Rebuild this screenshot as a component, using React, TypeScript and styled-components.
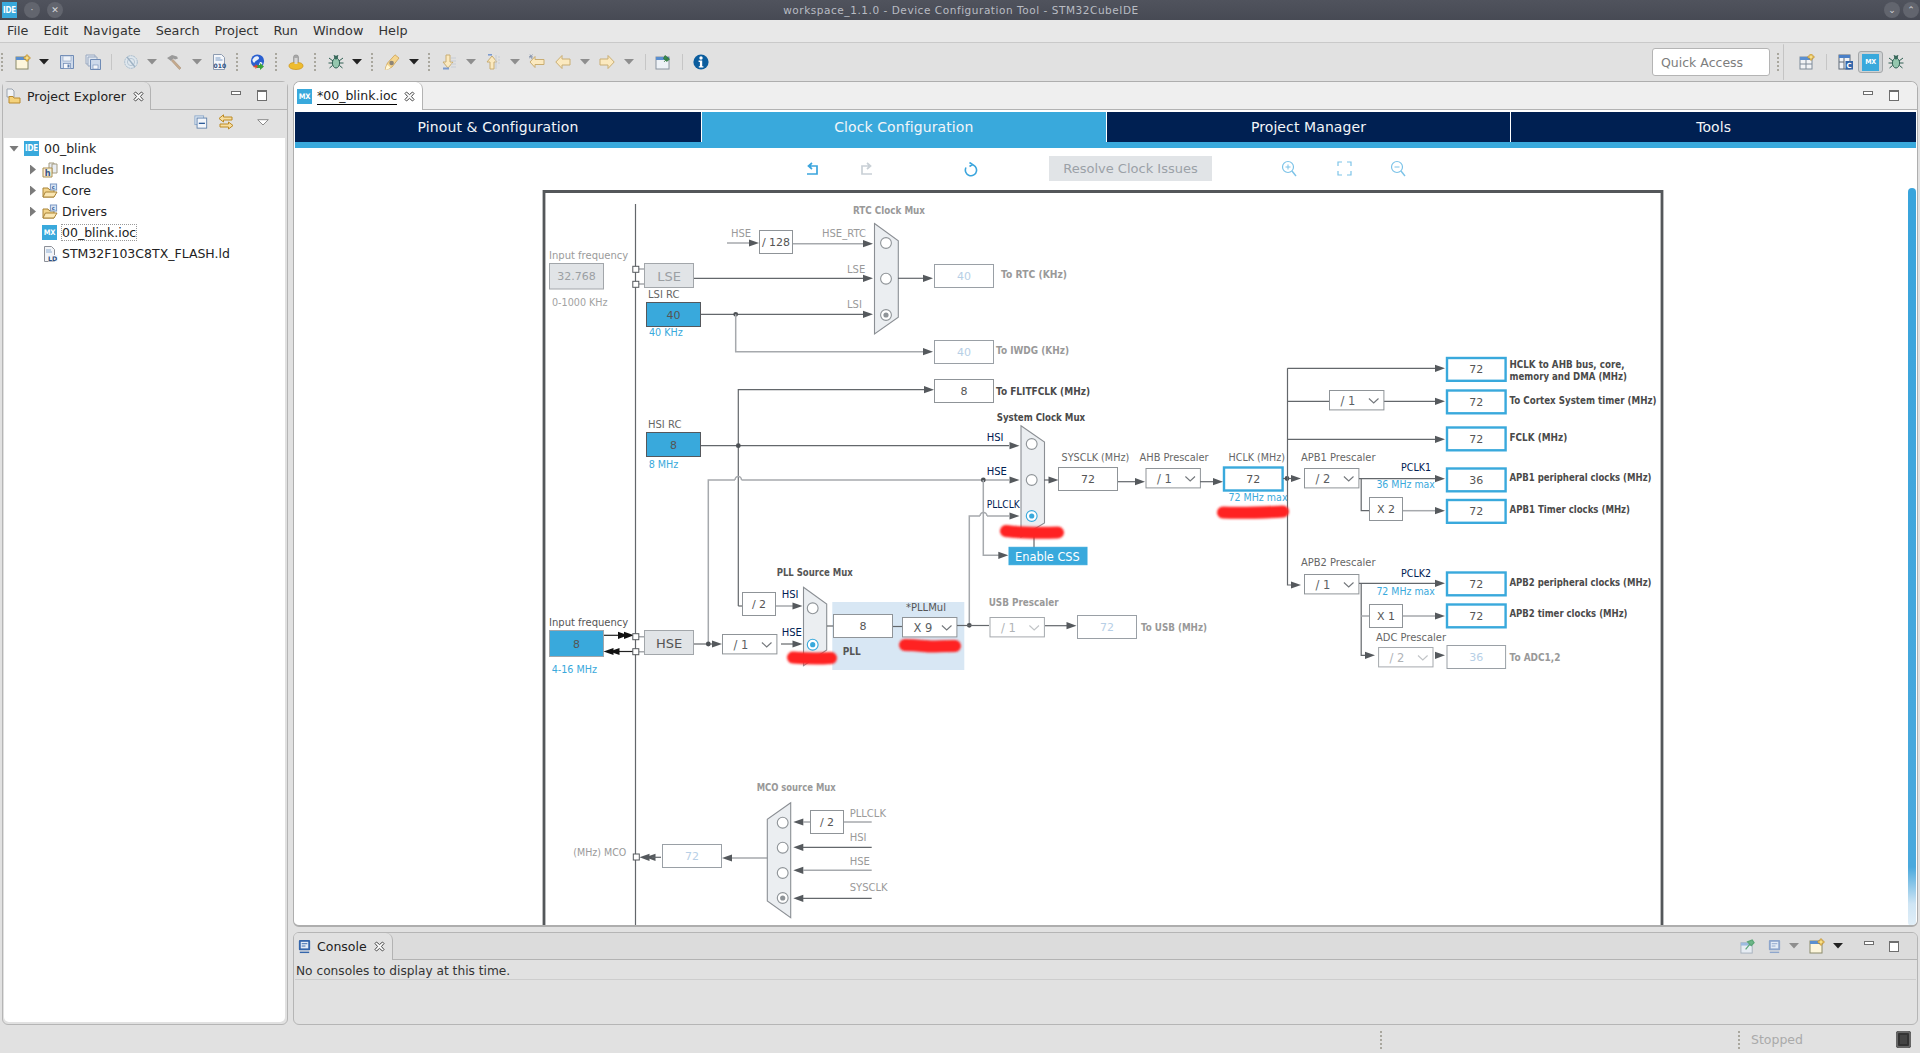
import React from "react";
import styled, { createGlobalStyle } from "styled-components";

const Global = createGlobalStyle`
  html, body { margin: 0; padding: 0; background: #e1e1e1; }
  * { box-sizing: border-box; }
`;

const FONT = `"DejaVu Sans", "Liberation Sans", sans-serif`;
const BLUE = "#39a9dc";
const NAVY = "#002052";

/* ---------- window chrome ---------- */
const Page = styled.div`
  width: 1920px; height: 1053px; display: flex; flex-direction: column; overflow: hidden;
  background: #e1e1e1; font-family: ${FONT}; font-size: 13px; color: #222;
`;
const TitleBar = styled.div`
  height: 20px; flex: none; position: relative; display: flex; align-items: center; justify-content: center;
  background: linear-gradient(#50535d, #474a54);
`;
const TitleText = styled.span`
  color: #b9bcc3; font-size: 10.5px; letter-spacing: 0.55px; margin-left: 2px;
`;
const TitleLeft = styled.div`
  position: absolute; left: 2px; top: 2px; display: flex; align-items: center; gap: 7px;
`;
const TitleRight = styled.div`
  position: absolute; right: 1px; top: 2px; display: flex; align-items: center; gap: 3px;
`;
const WinBtn = styled.span`
  width: 16px; height: 16px; border-radius: 50%; background: #62656e; color: #d6d7da;
  display: flex; align-items: center; justify-content: center; font-size: 9px; line-height: 1;
`;
const Badge = styled.span<{ $w?: number; $h?: number; $fs?: number; $mr?: number }>`
  width: ${(p) => p.$w ?? 15}px; height: ${(p) => p.$h ?? 15}px; flex: none; background: ${BLUE}; color: #fff;
  display: inline-flex; align-items: center; justify-content: center; margin-right: ${(p) => p.$mr ?? 0}px;
  font-size: ${(p) => p.$fs ?? 8}px; font-weight: 700; font-family: "DejaVu Sans Condensed", ${FONT}; letter-spacing: -0.2px;
`;
const MenuBar = styled.div`
  height: 23px; flex: none; display: flex; align-items: center; gap: 15px; padding: 0 0 1px 7px;
  background: #e8e8e8; border-bottom: 1px solid #c9c9c9;
`;
const MenuItem = styled.span`
  font-size: 12.8px; color: #333;
`;
const Toolbar = styled.div`
  height: 38px; flex: none; display: flex; align-items: center; background: #e1e1e1; position: relative;
`;
const Slot = styled.div<{ $w: number }>`
  width: ${(p) => p.$w}px; flex: none; display: flex; align-items: center; height: 100%;
`;
const Grip = styled.span`
  width: 2px; height: 18px; flex: none;
  background: repeating-linear-gradient(#a9a79e 0 2px, transparent 2px 4px);
`;
const Sep = styled.span`
  width: 1px; height: 16px; flex: none; background: #c6c6c6;
`;
const PerspSep = styled(Sep)`
  margin: 0 11px;
`;
const QuickWrap = styled.div`
  margin-left: auto; display: flex; align-items: center; height: 100%; padding-right: 16px;
`;
const QuickAccess = styled.div`
  width: 118px; height: 28px; background: #fff; border: 1px solid #b4b4b4; border-radius: 3px;
  color: #7d7d7d; font-size: 12.5px; display: flex; align-items: center; padding-left: 8px; margin-right: 7px;
`;
const GripCurve = styled.span`
  width: 1px; height: 36px; background: #c4c4c4; border-radius: 2px; margin: 0 15px 0 4px;
`;
const PerspectiveActive = styled.span`
  width: 25px; height: 22px; background: #cfd2d4; border: 1px solid #a4a7a9; border-radius: 3px;
  display: flex; align-items: center; justify-content: center; margin: 0 5px 0 4px;
`;

/* ---------- workspace panels ---------- */
const Workspace = styled.div`
  flex: none; height: 945px; display: flex; gap: 5px; padding: 0 2px 1px 2px;
`;
const LeftPanel = styled.section`
  width: 286px; flex: none; display: flex; flex-direction: column; background: #e1e1e1;
  border: 1px solid #b5b5b5; border-radius: 6px;
`;
const RightCol = styled.div`
  flex: 1; min-width: 0; display: flex; flex-direction: column; gap: 5px;
`;
const EditorPanel = styled.section`
  height: 846px; flex: none; display: flex; flex-direction: column; background: #fff;
  border: 1px solid #aeaeae; border-bottom-width: 2px; border-radius: 7px 7px 6px 6px; overflow: hidden;
`;
const ConsolePanel = styled.section`
  flex: 1; display: flex; flex-direction: column; background: #e1e1e1;
  border: 1px solid #b5b5b5; border-radius: 6px; overflow: hidden;
`;
const TabHeader = styled.div<{ $bg: string; $h: number }>`
  height: ${(p) => p.$h}px; flex: none; display: flex; align-items: stretch; background: ${(p) => p.$bg};
  border-bottom: 1px solid #b3b3b3;
`;
const Tab = styled.div<{ $w: number; $bg: string }>`
  width: ${(p) => p.$w}px; flex: none; display: flex; align-items: center; gap: 5px; padding-left: 3px;
  background: ${(p) => p.$bg}; border-right: 1px solid #b3b3b3; border-radius: 0 7px 0 0; margin-bottom: -1px;
  font-size: 12.5px; color: #222;
`;
const ActiveName = styled.span`
  font-size: 12.5px; border-bottom: 1px solid #000; padding-bottom: 1px; line-height: 15px;
`;
const PanelTools = styled.div<{ $pr: number }>`
  margin-left: auto; display: flex; align-items: center; padding-right: ${(p) => p.$pr}px; gap: 16px;
`;
const MinBtn = styled.span`
  width: 10px; height: 4px; border: 1px solid #6e6e6e; background: #fff; margin-top: -6px;
`;
const MaxBtn = styled.span`
  width: 10px; height: 11px; border: 1px solid #6e6e6e; border-top-width: 2px; background: #fff;
`;
const LeftTools = styled.div`
  height: 28px; flex: none; display: flex; align-items: center; justify-content: flex-end; padding: 0 18px 4px 0; gap: 10px;
`;
const ViewMenu = styled.svg`
  display: block; flex: none; margin-left: 13px;
`;
const Tree = styled.div`
  flex: 1; background: #fff; margin: 0 2px 2px 1px; display: flex; flex-direction: column; border-radius: 0 0 5px 5px;
`;
const TreeRow = styled.div<{ $indent: number }>`
  height: 21px; flex: none; display: flex; align-items: center; padding-left: ${(p) => p.$indent}px; gap: 4px; font-size: 12.5px; color: #222;
`;
const Twisty = styled.span<{ $open?: boolean }>`
  width: ${(p) => (p.$open ? 10 : 6)}px; flex: none; height: ${(p) => (p.$open ? 6 : 10)}px; margin-right: ${(p) => (p.$open ? 1 : 2)}px;
  background: #7b7b7b;
  clip-path: ${(p) => (p.$open ? "polygon(0 0,100% 0,50% 100%)" : "polygon(0 0,100% 50%,0 100%)")};
`;
const FocusName = styled.span`
  outline: 1px dotted #9a9a9a; margin-left: 1px;
`;

/* ---------- perspective nav ---------- */
const ClockNav = styled.nav`
  flex: none; display: grid; grid-template-columns: 407px repeat(3, 1fr); margin: 2px 1px 0 1px; border-bottom: 6px solid ${BLUE};
`;
const NavTab = styled.div<{ $active?: boolean }>`
  height: 30px; display: flex; align-items: center; justify-content: center; font-size: 14px; letter-spacing: 0.1px; color: #f2f5f8;
  background: ${(p) => (p.$active ? BLUE : NAVY)}; border-right: 1px solid #fff;
  &:last-child { border-right: 0; }
`;
const DiagramBar = styled.div`
  height: 37px; flex: none; display: flex; align-items: center; padding: 4px 0 0 509px;
`;
const BarIcon = styled.span<{ $ml?: number }>`
  width: 20px; height: 20px; flex: none; display: flex; align-items: center; justify-content: center; margin-left: ${(p) => p.$ml ?? 0}px;
`;
const ResolveBtn = styled.div`
  width: 163px; height: 25px; flex: none; margin-left: 68px; background: #e1e4e7; color: #9ba1a7;
  display: flex; align-items: center; justify-content: center; font-size: 13px;
`;
const ClockBody = styled.div`
  flex: 1; min-height: 0; position: relative; overflow: hidden;
`;
const DiagramSvg = styled.svg`
  display: block; margin-left: 236px;
`;
const ScrollThumb = styled.div`
  position: absolute; right: 1px; top: 40px; width: 8px; height: 738px; border-radius: 4px;
  background: linear-gradient(#39a4dc 0, #4aa9dd 92%, #cfe5f4 97%, #e2eff8 100%);
`;
const ConsoleMsg = styled.div`
  height: 18px; flex: none; display: flex; align-items: center; padding-left: 1px; font-size: 12.2px; color: #333;
  margin-top: 2px; border-bottom: 1px solid #cdcdcd; margin-left: 1px; margin-right: 1px;
`;
const ConsoleTools = styled.div`
  margin-left: auto; display: flex; align-items: center; padding-right: 18px;
`;
const ConsoleTool = styled.span<{ $w: number }>`
  width: ${(p) => p.$w}px; display: flex; align-items: center; flex: none;
`;
const StatusBar = styled.div`
  flex: 1; position: relative; display: flex; align-items: center; padding-left: 1380px;
`;
const StatusGrip = styled.span<{ $ml?: number }>`
  width: 2px; height: 18px; flex: none; margin-left: ${(p) => p.$ml ?? 0}px;
  background: repeating-linear-gradient(#a9a79e 0 2px, transparent 2px 4px);
`;
const Stopped = styled.span`
  color: #aaa; font-size: 12.5px; margin-left: 11px;
`;
const StopIcon = styled.span`
  width: 15px; height: 17px; background: #444; border-radius: 3px; margin-left: auto; margin-right: 9px; box-shadow: inset 0 0 0 2px #666, inset 0 0 0 4px #333;
`;

/* ---------- small icons ---------- */
const Ico = styled.svg`
  display: block; flex: none;
`;
const CloseSvg = styled.svg`
  display: block; flex: none; margin-left: 2px;
`;
const Dd = ({ off }: { off?: boolean }) => (
  <Ico width="10" height="6" viewBox="0 0 10 6"><path d="M0 0h10L5 5.5z" fill={off ? "#8e8e8e" : "#222"} /></Ico>
);
const Close = () => (
  <CloseSvg width="11" height="11" viewBox="0 0 11 11">
    <path d="M1 2.5 2.5 1 5.5 3.6 8.5 1 10 2.5 7.4 5.5 10 8.5 8.5 10 5.5 7.4 2.5 10 1 8.5 3.6 5.5z" fill="#fff" stroke="#444" strokeWidth="1" />
  </CloseSvg>
);
type IconName = "new" | "save" | "saveall" | "gear" | "hammer" | "bin" | "globe" | "stick" | "bug" | "pen" | "down" | "up" | "back" | "left" | "right" | "task" | "info" | "persp" | "cpersp" | "pin" | "console" | "consoleOff" | "collapse" | "link" | "inc" | "cfolder" | "ld" | "explorer";
const Icon = ({ n, s = 16 }: { n: IconName; s?: number }) => {
  const P: Record<IconName, React.ReactNode> = {
    new: <><rect x="1" y="3" width="12" height="12" fill="#fdf6dc" stroke="#8a8a6a" /><rect x="1" y="3" width="12" height="3" fill="#5a8fd0" /><path d="M11 1h2v2h2v2h-2v2h-2V5H9V3h2z" fill="#f7e08a" stroke="#c08a20" strokeWidth=".7" /></>,
    save: <><path d="M1.5 1.5h13v13h-13z" fill="#cdd9ea" stroke="#6f8bb5" /><rect x="4" y="2" width="8" height="5" fill="#eef2f8" stroke="#8aa0c2" strokeWidth=".6" /><rect x="4.5" y="9.5" width="7" height="5" fill="#f5f7fa" stroke="#6f8bb5" strokeWidth=".7" /><rect x="8.5" y="10.5" width="2" height="3" fill="#5f7fae" /></>,
    saveall: <><path d="M1 1h9v9H1z" fill="#dfe6f0" stroke="#9aa9c0" /><path d="M3 3h9v9H3z" fill="#dfe6f0" stroke="#9aa9c0" /><path d="M5.5 5.5h10v10h-10z" fill="#cdd9ea" stroke="#6f8bb5" /><rect x="8" y="11" width="5" height="4" fill="#f5f7fa" stroke="#6f8bb5" strokeWidth=".6" /></>,
    gear: <><circle cx="8" cy="8" r="6.3" fill="#dfe7ee" stroke="#a7bccd" strokeDasharray="2 .6" /><circle cx="8" cy="8" r="3.6" fill="none" stroke="#b7c6d3" /><path d="M4 3l8 10" stroke="#9eb2c4" strokeWidth="1.4" /></>,
    hammer: <><path d="M1 4 6 1l5 1.5 1 2-3 1-1.5-1L5 7z" fill="#9a9a9a" /><path d="M7 5.5 15 14l-1.6 1.6L5.5 7z" fill="#c4a98c" stroke="#a68c72" strokeWidth=".5" /></>,
    bin: <><path d="M2.5.5h8l3 3v12h-11z" fill="#f4f6fa" stroke="#8c9bb0" /><path d="M4.5 4h5M4.5 6h7" stroke="#7b9cc6" /><text x="2.6" y="14" fontSize="6" fontFamily="DejaVu Sans" fontWeight="700" fill="#2f4f7f">010</text></>,
    globe: <><circle cx="7.5" cy="7" r="6.6" fill="#2a5fd0" /><path d="M4 3.5c2-2 5-1.5 5 .5S6 6 5 8 2 7 2.5 5.5zM10 8c2 0 3 1 2 2.5S9 12 9 10.5z" fill="#e8f0fb" /><path d="M7 11h3V9l4 3.5-4 3.5v-2H7z" fill="#3aa13a" /><path d="M8 12.5 5.5 10v1.7H3.5v1.6h2V15z" fill="#e0452a" /></>,
    stick: <><rect x="5.5" y="1" width="5" height="10" rx="2.2" fill="#a9a9a9" stroke="#8a8a8a" strokeWidth=".6" /><path d="M1 12c0-3 3-3.5 7-3.5s7 .5 7 3.5c0 2-3 3.5-7 3.5S1 14 1 12z" fill="#eebc2f" stroke="#c8921a" strokeWidth=".7" /><rect x="6.5" y="4" width="3" height="6" fill="#d6d6d6" /></>,
    bug: <><ellipse cx="8" cy="9" rx="3.6" ry="5" fill="#94c7ae" stroke="#2e5f52" /><circle cx="8" cy="3.6" r="2" fill="#3b6b5e" /><path d="M1 4l4 3M15 4l-4 3M.5 9h3.5M15.5 9H12M1.5 14l3-2.5M14.5 14l-3-2.5M6 1l1 2M10 1 9 3" stroke="#2e5f52" strokeWidth="1" fill="none" /></>,
    pen: <><path d="M11 .8 15 4 8 13 4 15l-2.7 .8L2 12.5 3.5 9z" fill="#f5d690" stroke="#c89a45" strokeWidth=".7" /><path d="M3 10.5l3.5 3L4 15.2l-2.7.7z" fill="#fff8d8" /><circle cx="7.6" cy="9" r="2.3" fill="#8c8478" /></>,
    down: <><path d="M5 1h4v7h3l-5 6-5-6h3z" fill="#fbe9bf" stroke="#c9ad72" /><path d="M10 4h5M10 7h5M10 10h5M10 13h5" stroke="#c7cdd6" /><rect x="2" y="13.5" width="6" height="2" fill="#7d9bcf" /></>,
    up: <><path d="M7 15h-4V8H0l5-6 5 6H7z" transform="translate(2 0)" fill="#fbe9bf" stroke="#c9ad72" /><path d="M11 1v14M13 3h2M13 6h2M13 9h2" stroke="#c7cdd6" /><rect x="3" y="0" width="4" height="1.6" fill="#7d9bcf" /></>,
    back: <><path d="M6 2.5 1 8l5 5.5V10.5h9V5.5H6z" fill="#fbe9bf" stroke="#c9ad72" /><path d="M1 .5 3 5M3.5.5 0 4.5M0 2.5l4 .5" stroke="#7f8ea8" strokeWidth=".8" /></>,
    left: <path d="M7 1.5.8 8 7 14.5V11h8V5H7z" fill="#fbe9bf" stroke="#c9ad72" />,
    right: <path d="M9 1.5 15.2 8 9 14.5V11H1V5h8z" fill="#fbe9bf" stroke="#c9ad72" />,
    task: <><rect x="1" y="3" width="13" height="12" fill="#eef2f7" stroke="#8a949f" /><rect x="1" y="3" width="13" height="3" fill="#5a8fd0" /><path d="M9 8l3.5-4M10 1.5l4.5 3.5L12 7.5 8.5 4.5z" fill="#3a8a4a" stroke="#2c6e3a" strokeWidth=".7" /></>,
    info: <><circle cx="8" cy="8" r="7.6" fill="#0b5d9e" /><circle cx="8" cy="4" r="1.7" fill="#fff" /><path d="M5.6 6.6h3.6v5.6h1.2v1.4H5.8v-1.4h1.1V8H5.6z" fill="#fff" /></>,
    persp: <><rect x="1" y="3" width="12" height="12" fill="#f1f3f6" stroke="#7f8b99" /><rect x="1" y="3" width="12" height="3" fill="#5a8fd0" /><path d="M7 6v9M1 10h12" stroke="#7f8b99" /><path d="M11 0h2v2h2v2h-2v2h-2V4H9V2h2z" fill="#f7e08a" stroke="#c08a20" strokeWidth=".7" /></>,
    cpersp: <><rect x="1" y="1" width="11" height="14" fill="#f1f3f6" stroke="#5f6b79" /><rect x="1" y="1" width="11" height="3" fill="#4a80c8" /><path d="M6 4v11M1 8h5" stroke="#5f6b79" /><rect x="7.5" y="7" width="7.5" height="8.5" fill="#3366aa" /><text x="8.4" y="14" fontSize="7" fontWeight="700" fontFamily="DejaVu Sans" fill="#fff">C</text></>,
    pin: <><rect x="1" y="4" width="12" height="11" fill="#e6ecf3" stroke="#a5b0bc" /><rect x="1" y="4" width="12" height="3" fill="#9dbbe0" /><path d="M6 11l5-6M8 3l5-2 2 3-3 3z" stroke="#5aa676" strokeWidth="1.3" fill="#6cb688" /></>,
    console: <><rect x="2" y="1" width="12" height="11" rx="1" fill="#3566ab" /><rect x="4" y="3" width="8" height="7" fill="#e3ebf6" /><path d="M5 5h6M5 7.5h4" stroke="#3566ab" /><rect x="3" y="13.5" width="10" height="1.5" fill="#3566ab" /></>,
    consoleOff: <><rect x="2" y="1" width="12" height="11" rx="1" fill="#8ea6cc" /><rect x="4" y="3" width="8" height="7" fill="#e3ebf6" /><path d="M5 5h6M5 7.5h4" stroke="#8ea6cc" /><rect x="3" y="13.5" width="10" height="1.5" fill="#8ea6cc" /></>,
    collapse: <><rect x="1" y="1" width="10" height="10" fill="#dde6f1" stroke="#8aa8cb" /><rect x="3.5" y="3.5" width="11" height="11.5" fill="#f3f6fa" stroke="#5d7fa9" /><path d="M5.5 9.5h7" stroke="#1d4f91" strokeWidth="1.4" /></>,
    link: <><path d="M5.5.8 1 4.5 5.5 8V6H14V3H5.5z" fill="#f7dea0" stroke="#bc8a25" /><path d="M10.5 8 15 11.5 10.5 15v-2H2v-3h8.5z" fill="#f7dea0" stroke="#bc8a25" /></>,
    explorer: <><path d="M1 1h5l2 2v6H1z" fill="#f2f4f7" stroke="#9aa3ae" /><path d="M3 8.5h4l1 1.5h6v5H3z" fill="#f4d27c" stroke="#b98a2f" /></>,
    inc: <><path d="M7 1h5v9H7z" fill="#e9edf3" stroke="#a59c80" /><path d="M10 2h5v9h-5z" fill="#e9edf3" stroke="#a59c80" /><path d="M1 6h9v9H1z" fill="#f8efd7" stroke="#ac8f4e" /><text x="2.8" y="13.6" fontSize="8.2" fontWeight="700" fontFamily="DejaVu Sans" fill="#34538a">h</text></>,
    cfolder: <><path d="M1 14V5h5l1 1.5h5V14z" fill="#f2d48c" stroke="#a98336" /><path d="M1 14l2.4-5H15l-3 5z" fill="#fbe7b3" stroke="#a98336" /><rect x="8.4" y="1" width="6.2" height="6" fill="#d8e3f2" stroke="#7a97c4" /><text x="9.8" y="6" fontSize="5.2" fontWeight="700" fontFamily="DejaVu Sans" fill="#2f5ea0">c</text></>,
    ld: <><path d="M2.5.5h7l3 3v12h-10z" fill="#f3f5f8" stroke="#8d9098" /><path d="M4 4h5M4 6h6" stroke="#8eaed3" /><rect x="6" y="9" width="9.5" height="6.5" fill="#f0f4fa" /><text x="6" y="15" fontSize="6.3" fontWeight="700" fontFamily="DejaVu Sans" fill="#2f4f7f">LD</text></>,
  };
  return <Ico width={s} height={s} viewBox="0 0 16 16">{P[n]}</Ico>;
};

type TB = { x: number; el: React.ReactNode };
const toolItems: TB[] = [
  { x: 0, el: null }, { x: 1, el: <Grip /> }, { x: 15, el: <Icon n="new" /> }, { x: 39, el: <Dd /> }, { x: 59, el: <Icon n="save" /> },
  { x: 85, el: <Icon n="saveall" /> }, { x: 111, el: <Sep /> }, { x: 123, el: <Icon n="gear" /> }, { x: 147, el: <Dd off /> },
  { x: 166, el: <Icon n="hammer" /> }, { x: 192, el: <Dd off /> }, { x: 211, el: <Icon n="bin" /> }, { x: 236, el: <Grip /> },
  { x: 250, el: <Icon n="globe" /> }, { x: 275, el: <Grip /> }, { x: 288, el: <Icon n="stick" /> }, { x: 314, el: <Grip /> },
  { x: 328, el: <Icon n="bug" /> }, { x: 352, el: <Dd /> }, { x: 371, el: <Grip /> }, { x: 384, el: <Icon n="pen" /> },
  { x: 409, el: <Dd /> }, { x: 428, el: <Grip /> }, { x: 441, el: <Icon n="down" /> }, { x: 466, el: <Dd off /> },
  { x: 485, el: <Icon n="up" /> }, { x: 510, el: <Dd off /> }, { x: 529, el: <Icon n="back" /> }, { x: 555, el: <Icon n="left" /> },
  { x: 580, el: <Dd off /> }, { x: 599, el: <Icon n="right" /> }, { x: 624, el: <Dd off /> }, { x: 645, el: <Sep /> },
  { x: 655, el: <Icon n="task" /> }, { x: 682, el: <Sep /> }, { x: 693, el: <Icon n="info" /> },
];

/* ---------- diagram primitives ---------- */
const Txt = styled.text<{ $c?: string; $fs?: number; $b?: boolean; $ls?: number }>`
  font-family: ${FONT}; font-size: ${(p) => p.$fs ?? 10}px; fill: ${(p) => p.$c ?? "#666"};
  font-weight: ${(p) => (p.$b ? 700 : 400)}; dominant-baseline: central;
  letter-spacing: ${(p) => p.$ls ?? 0}px;
`;
const WirePath = styled.path<{ $light?: boolean; $black?: boolean }>`
  fill: none; stroke: ${(p) => (p.$black ? "#222" : p.$light ? "#a6a9ad" : "#63676b")};
  stroke-width: ${(p) => (p.$light ? 1.5 : 1.2)}px;
`;
const BoxRect = styled.rect<{ $fill: string; $stroke: string; $sw?: number }>`
  fill: ${(p) => p.$fill}; stroke: ${(p) => p.$stroke}; stroke-width: ${(p) => p.$sw ?? 1}px;
`;
const MuxShape = styled.polygon`
  fill: #ebeef1; stroke: #8b8f94; stroke-width: 1.1px;
`;
const Blob = styled.path`
  fill: none; stroke: #ff2320; stroke-width: 12px; stroke-linecap: round; stroke-linejoin: round; filter: url(#soft);
`;
const ArrowHead = styled.polygon<{ $black?: boolean }>`
  fill: ${(p) => (p.$black ? "#111" : "#55595d")};
`;
const DotC = styled.circle`
  fill: #4d5155;
`;
const Chevron = styled.path<{ $off?: boolean }>`
  fill: none; stroke: ${(p) => (p.$off ? "#c0c3c6" : "#73777b")}; stroke-width: 1.1px;
`;

const W = ({ d, light, black }: { d: string; light?: boolean; black?: boolean }) => <WirePath d={d} $light={light} $black={black} />;
const AR = ({ x, y, black }: { x: number; y: number; black?: boolean }) => (
  <ArrowHead points={`${x},${y} ${x - 10},${y - 3.6} ${x - 10},${y + 3.6}`} $black={black} />
);
const AL = ({ x, y, black }: { x: number; y: number; black?: boolean }) => (
  <ArrowHead points={`${x},${y} ${x + 10},${y - 3.6} ${x + 10},${y + 3.6}`} $black={black} />
);
const Dot = ({ x, y }: { x: number; y: number }) => <DotC cx={x} cy={y} r={2.4} />;
const Label = ({ x, y, t, c, b, w, fs, ls }: { x: number; y: number; t: string; c?: string; b?: boolean; w?: number; fs?: number; ls?: number }) => (
  <Txt x={x} y={y} $c={c} $b={b} $fs={fs} $ls={ls} textLength={w} lengthAdjust={w ? "spacingAndGlyphs" : undefined}>{t}</Txt>
);
type Kind = "plain" | "off" | "blue" | "filled" | "input" | "gray" | "grayOn";
const Box = ({ x, y, w, h, t, k = "plain", fs = 11 }: { x: number; y: number; w: number; h: number; t: string; k?: Kind; fs?: number }) => {
  const fill = k === "filled" || k === "input" ? BLUE : k === "gray" || k === "grayOn" ? "#e1e4e7" : "#fff";
  const stroke = k === "filled" ? "#55585c" : k === "blue" ? BLUE : k === "gray" || k === "grayOn" || k === "input" ? "#a2a6aa" : k === "off" ? "#9aa0a6" : "#8f9498";
  const color = k === "off" ? "#b7cfe6" : k === "gray" ? "#9b9fa3" : "#555";
  return (
    <g>
      <BoxRect x={x} y={y} width={w} height={h} $fill={fill} $stroke={stroke} $sw={k === "blue" ? 2.4 : 1} />
      <Txt x={x + w / 2} y={y + h / 2 + 0.5} $c={color} $fs={fs} textAnchor="middle">{t}</Txt>
    </g>
  );
};
const Sel = ({ x, y, t, off, w = 54.4 }: { x: number; y: number; t: string; off?: boolean; w?: number }) => (
  <g>
    <BoxRect x={x} y={y} width={w} height={19.4} $fill="#fff" $stroke={off ? "#a5a9ad" : "#8f9498"} />
    <Txt x={x + 11} y={y + 10} $fs={11.5} $c={off ? "#b0b3b6" : "#5b5f63"}>{t}</Txt>
    <Chevron d={`M${x + w - 15} ${y + 8} l4.8 4.5 4.8 -4.5`} $off={off} />
  </g>
);
const Radio = ({ x, y, on, blue }: { x: number; y: number; on?: boolean; blue?: boolean }) => (
  <g>
    <circle cx={x} cy={y} r={5.4} fill="#fff" stroke={blue ? BLUE : "#8f9498"} strokeWidth={1.1} />
    {on && <circle cx={x} cy={y} r={2.6} fill={blue ? BLUE : "#8f9498"} />}
  </g>
);

const Diagram = () => (
  <DiagramSvg width="1145" height="742" viewBox="530 185 1145 742">
    <defs>
      <filter id="soft" filterUnits="userSpaceOnUse" x="530" y="185" width="1145" height="742"><feGaussianBlur stdDeviation="0.9" /></filter>
    </defs>
    {/* frame */}
    <W d="M635.5 204V927" />
    <path d="M544 927V191.5H1662V927" fill="none" stroke="#54575a" strokeWidth="2.8" />

    {/* RTC */}
    <Label x={853} y={210.3} t="RTC Clock Mux" b c="#999" w={72} />
    <Label x={549} y={255.7} t="Input frequency" c="#9a9a9a" />
    <Box x={549.5} y={263.5} w={54} h={25.5} t="32.768" k="gray" />
    <Label x={552} y={302.7} t="0-1000 KHz" c="#a2a2a2" fs={9.6} />
    <W d="M639 269H644M639 284H644" light />
    <BoxRect x={632.8} y={266.3} width={6} height={6} $fill="#fff" $stroke="#55595d" />
    <BoxRect x={632.8} y={281.3} width={6} height={6} $fill="#fff" $stroke="#55595d" />
    <Box x={644.5} y={263.5} w={49} h={24} t="LSE" k="gray" fs={13} />
    <Label x={648} y={294} t="LSI RC" />
    <Box x={646.5} y={302.5} w={54} h={24} t="40" k="filled" />
    <Label x={649} y={332.7} t="40 KHz" c={BLUE} fs={9.6} />
    <Label x={731} y={233.7} t="HSE" c="#9a9a9a" />
    <W d="M727 243H750" light /><AR x={759} y={243} />
    <Box x={759.5} y={230.5} w={33} h={23} t="/ 128" />
    <W d="M793 243.7H864" light /><AR x={873} y={243.7} />
    <Label x={822} y={233.7} t="HSE_RTC" c="#9a9a9a" />
    <W d="M694 278.3H864" /><AR x={873} y={278.3} />
    <Label x={847} y={269.7} t="LSE" c="#9a9a9a" />
    <W d="M701 314.3H864" /><AR x={873} y={314.3} />
    <Dot x={735.7} y={314.3} />
    <Label x={847} y={304.7} t="LSI" c="#9a9a9a" />
    <W d="M735.7 314.3V351.7H924" light /><AR x={933} y={351.7} />
    <MuxShape points="874.5,223.5 898.3,240.7 898.3,317.3 874.5,334" />
    <Radio x={886} y={243} /><Radio x={886} y={278.7} /><Radio x={886} y={315} on />
    <W d="M898 278.3H924" /><AR x={933} y={278.3} />
    <Box x={934.5} y={264.5} w={59} h={23} t="40" k="off" />
    <Label x={1001} y={274.3} t="To RTC (KHz)" b c="#999" w={66} />
    <Box x={934.5} y={340.5} w={59} h={23} t="40" k="off" />
    <Label x={996} y={350.3} t="To IWDG (KHz)" b c="#999" w={73} />

    {/* HSI */}
    <Box x={934.5} y={379.5} w={59} h={23} t="8" />
    <Label x={996} y={391.3} t="To FLITFCLK (MHz)" b c="#4a4a4a" w={94} />
    <Label x={648} y={424.7} t="HSI RC" />
    <Box x={646.5} y={432.5} w={54} h={24} t="8" k="filled" />
    <Label x={648.7} y={464.7} t="8 MHz" c={BLUE} fs={9.6} />
    <W d="M738.3 606V389.7H924" /><AR x={934} y={389.7} />
    <W d="M738.3 606H742.5" />
    <W d="M701 445.7H1009" /><AR x={1019.5} y={445.7} />
    <Dot x={738.3} y={445.7} />
    <Label x={986.7} y={437.7} t="HSI" c={NAVY} />
    <W d="M708.3 644V480H735M741.5 480H1009" light /><AR x={1019.5} y={480} />
    <W d="M735 480a3.2 3.5 0 0 1 6.5 0" light />
    <Dot x={983.3} y={480} />
    <Label x={986.7} y={471.7} t="HSE" c={NAVY} />
    <W d="M983.3 480V555.3H999" light /><AR x={1008.3} y={555.3} />
    <W d="M969.3 625.3V516H980M987 516H1009" light /><W d="M980 516a3.4 3.5 0 0 1 7 0" light /><AR x={1019.5} y={516} />
    <Dot x={969.3} y={625.3} />
    <Label x={986.7} y={504.7} t="PLLCLK" c={NAVY} w={33} />
    <Label x={996.7} y={417.7} t="System Clock Mux" b c="#4a4a4a" w={88.5} />
    <MuxShape points="1021,425.7 1044.5,442 1044.5,523 1021,537" />
    <Radio x={1031.7} y={444} /><Radio x={1031.7} y={480} /><Radio x={1031.7} y={516} on blue />
    <W d="M1034 536V548" />
    <BoxRect x={1009} y={547.3} width={78} height={17.4} $fill={BLUE} $stroke={BLUE} />
    <Txt x={1015} y={556.5} $c="#fff" $fs={11.4}>Enable CSS</Txt>

    {/* HSE */}
    <Label x={549} y={622.7} t="Input frequency" c="#555" />
    <Box x={549.5} y={630.5} w={54} h={26} t="8" k="input" />
    <W d="M604 635.3H630" black /><AR x={628} y={635.3} black /><AR x={634} y={635.3} black />
    <W d="M612 651.5H634" black /><AL x={603.5} y={651.5} black /><AL x={609.5} y={651.5} black />
    <W d="M639 636.7H644M639 651.7H644" light />
    <BoxRect x={632.8} y={633.7} width={6} height={6} $fill="#fff" $stroke="#55595d" />
    <BoxRect x={632.8} y={648.7} width={6} height={6} $fill="#fff" $stroke="#55595d" />
    <Box x={644.5} y={630.5} w={49} h={24} t="HSE" k="grayOn" fs={13} />
    <Label x={551.7} y={669.7} t="4-16 MHz" c={BLUE} fs={9.6} />
    <W d="M694 644H713" /><Dot x={708.3} y={644} /><AR x={722} y={644} />
    <Sel x={722.5} y={634.5} t="/ 1" />
    <W d="M781 644H793" /><AR x={802.5} y={644} />
    <Label x={781.7} y={632.7} t="HSE" c={NAVY} />
    <Box x={742.5} y={592.5} w={33} h={23} t="/ 2" />
    <W d="M776 606H793" light /><AR x={802.5} y={606} />
    <Label x={781.7} y={594.7} t="HSI" c={NAVY} />
    <Label x={776.7} y={572.7} t="PLL Source Mux" b c="#555" w={76} />
    <path d="M832.3 602h132v68h-132z" fill="#d8e7f4" />
    <MuxShape points="803.5,587.3 826.7,604 826.7,650 803.5,665.7" />
    <Radio x={812.7} y={608.3} /><Radio x={812.7} y={644.7} on blue />
    <W d="M827 626H834" />
    <Box x={833.5} y={614.5} w={59} h={23} t="8" />
    <W d="M893 626.5H902" />
    <Label x={906} y={607.7} t="*PLLMul" c="#555" />
    <Sel x={902.5} y={617.5} t="X 9" />
    <W d="M957 625.5H989" /><Label x={842.7} y={651.7} t="PLL" b c="#555" w={18} />
    <Label x={988.7} y={602.7} t="USB Prescaler" b c="#999" w={70} />
    <Sel x={990} y={617.5} t="/ 1" off />
    <W d="M1045 625.7H1067" /><AR x={1076.5} y={625.7} />
    <Box x={1077.5} y={615.5} w={59} h={23} t="72" k="off" />
    <Label x={1141} y={627.3} t="To USB (MHz)" b c="#999" w={66} />

    {/* SYSCLK chain */}
    <W d="M1044 480H1049" /><AR x={1058.5} y={480} />
    <Label x={1061.6} y={457.7} t="SYSCLK (MHz)" w={67.6} />
    <Box x={1058.5} y={467.5} w={59} h={23} t="72" />
    <W d="M1118 481.7H1135" /><AR x={1145} y={481.7} />
    <Label x={1139.6} y={457.7} t="AHB Prescaler" w={69} />
    <Sel x={1146} y={468.5} t="/ 1" />
    <W d="M1200 481.7H1213" /><AR x={1223} y={481.7} />
    <Label x={1228.5} y={457.7} t="HCLK (MHz)" w={56.5} />
    <Box x={1224} y={467.5} w={58.6} h={23} t="72" k="blue" />
    <Label x={1228.5} y={497.7} t="72 MHz max" c={BLUE} w={59} />
    <W d="M1283 478.5H1291" /><Dot x={1287} y={478.5} /><AR x={1301} y={478.5} />
    <W d="M1287.5 368.3V585H1291" />
    <W d="M1287.5 368.3H1435" /><AR x={1445} y={368.3} />
    <W d="M1287.5 401.3H1330M1383.5 401.3H1435" /><AR x={1445} y={401.3} />
    <W d="M1287.5 439.3H1435" /><AR x={1445} y={439.3} />
    <Sel x={1329.5} y={390.5} t="/ 1" />
    <Box x={1447} y={358} w={58.6} h={22.8} t="72" k="blue" />
    <Box x={1447} y={390.5} w={58.6} h={22.8} t="72" k="blue" />
    <Box x={1447} y={427.5} w={58.6} h={22.8} t="72" k="blue" />
    <Label x={1509.5} y={364.7} t="HCLK to AHB bus, core," b c="#4a4a4a" w={115} />
    <Label x={1509.5} y={376.7} t="memory and DMA (MHz)" b c="#4a4a4a" w={117.5} />
    <Label x={1509.5} y={400.7} t="To Cortex System timer (MHz)" b c="#4a4a4a" w={147} />
    <Label x={1509.5} y={437.7} t="FCLK (MHz)" b c="#4a4a4a" w={57.7} />

    {/* APB1 */}
    <Label x={1301} y={457.7} t="APB1 Prescaler" w={74.5} />
    <Sel x={1304.5} y={468.5} t="/ 2" />
    <W d="M1359 478.7H1435" /><AR x={1445} y={478.7} />
    <Label x={1401} y={467.7} t="PCLK1" c={NAVY} w={30} />
    <Label x={1376.4} y={484.7} t="36 MHz max" c={BLUE} w={58.5} />
    <Box x={1447} y={468.5} w={58.6} h={22.8} t="36" k="blue" />
    <W d="M1361.2 478.7V510.7H1369" />
    <Box x={1369.5} y={497.5} w={33} h={23} t="X 2" />
    <W d="M1403 510.7H1435" light /><AR x={1445} y={510.7} />
    <Box x={1447} y={500} w={58.6} h={22.8} t="72" k="blue" />
    <Label x={1509.5} y={477.7} t="APB1 peripheral clocks (MHz)" b c="#4a4a4a" w={142} />
    <Label x={1509.5} y={509.3} t="APB1 Timer clocks (MHz)" b c="#4a4a4a" w={120.5} />

    {/* APB2 */}
    <AR x={1301} y={585} />
    <Label x={1301} y={562.7} t="APB2 Prescaler" w={74.5} />
    <Sel x={1304.5} y={574.5} t="/ 1" />
    <W d="M1359 583.3H1435" /><AR x={1445} y={583.3} />
    <Label x={1401} y={573.7} t="PCLK2" c={NAVY} w={30} />
    <Label x={1376.4} y={591.7} t="72 MHz max" c={BLUE} w={58.5} />
    <Box x={1447} y={572.5} w={58.6} h={22.8} t="72" k="blue" />
    <W d="M1361.2 583.3V655.3H1366" />
    <W d="M1361.2 616H1369" light />
    <Box x={1369.5} y={604.5} w={33} h={23} t="X 1" />
    <W d="M1403 616H1435" light /><AR x={1445} y={616} />
    <Box x={1447} y={604.5} w={58.6} h={22.8} t="72" k="blue" />
    <Label x={1509.5} y={582.7} t="APB2 peripheral clocks (MHz)" b c="#4a4a4a" w={142} />
    <Label x={1509.5} y={613.3} t="APB2 timer clocks (MHz)" b c="#4a4a4a" w={118} />
    <AR x={1375} y={655.3} />
    <Label x={1376} y={637.7} t="ADC Prescaler" w={70} />
    <Sel x={1378.6} y={647.5} t="/ 2" off />
    <AR x={1445} y={655.3} />
    <Box x={1447} y={645.5} w={58.6} h={23} t="36" k="off" />
    <Label x={1509.5} y={657.3} t="To ADC1,2" b c="#999" w={51} />

    {/* MCO */}
    <Label x={573.3} y={852.7} t="(MHz) MCO" c="#9a9a9a" fs={9.6} w={53} />
    <BoxRect x={633.3} y={854} width={6} height={6} $fill="#fff" $stroke="#55595d" />
    <AL x={639.5} y={857.3} /><AL x={645.5} y={857.3} />
    <W d="M652 857.3H661" />
    <Box x={662.5} y={844.5} w={59} h={23} t="72" k="off" />
    <AL x={722} y={858} />
    <W d="M732 858H768" light />
    <Label x={756.7} y={787.7} t="MCO source Mux" b c="#999" w={79} />
    <MuxShape points="790.7,802.7 767.3,819.3 767.3,901 790.7,917.7" />
    <Radio x={782.7} y={822.7} /><Radio x={782.7} y={847.7} /><Radio x={782.7} y={873} /><Radio x={782.7} y={898} on />
    <AL x={793.3} y={822} /><W d="M803 822H810" light />
    <Box x={810.5} y={810.5} w={33} h={23} t="/ 2" />
    <W d="M844 822H871.7" light />
    <AL x={793.3} y={847.3} /><W d="M803 847.3H871.7" />
    <AL x={793.3} y={870.3} /><W d="M803 870.3H871.7" light />
    <AL x={793.3} y={898.3} /><W d="M803 898.3H871.7" />
    <Label x={849.7} y={813.7} t="PLLCLK" c="#9a9a9a" />
    <Label x={849.7} y={837.7} t="HSI" c="#9a9a9a" />
    <Label x={849.7} y={861.7} t="HSE" c="#9a9a9a" />
    <Label x={849.7} y={887.7} t="SYSCLK" c="#9a9a9a" />

    {/* hand-drawn red marks */}
    <Blob d="M793 657.5c12 1 24 1.5 38 .5" />
    <Blob d="M905 645c14 0 20 1.5 26 1.5 8 0 14 -.5 24 -.5" />
    <Blob d="M1006 531c16 2 34 2 52 1.5" />
    <Blob d="M1223 512.5c20 1 40 0 60 -1" />
  </DiagramSvg>
);

const Zoomer = ({ sign }: { sign: "+" | "-" }) => (
  <Ico width="16" height="18" viewBox="0 0 16 18">
    <circle cx="7" cy="7" r="5.5" fill="none" stroke="#7cc3e8" strokeWidth="1.2" />
    <path d="M11 11l4 5" stroke="#7cc3e8" strokeWidth="1.4" />
    <path d={sign === "+" ? "M4.5 7h5M7 4.5v5" : "M4.5 7h5"} stroke="#7cc3e8" strokeWidth="1" />
  </Ico>
);

export default function App() {
  return (
    <Page>
      <Global />
      <TitleBar>
        <TitleLeft>
          <Badge $w={15} $h={16} $fs={8}>IDE</Badge>
          <WinBtn>·</WinBtn>
          <WinBtn>✕</WinBtn>
        </TitleLeft>
        <TitleText>workspace_1.1.0 - Device Configuration Tool - STM32CubeIDE</TitleText>
        <TitleRight>
          <WinBtn>⌄</WinBtn>
          <WinBtn>⌃</WinBtn>
        </TitleRight>
      </TitleBar>
      <MenuBar>
        {["File", "Edit", "Navigate", "Search", "Project", "Run", "Window", "Help"].map((m) => (
          <MenuItem key={m}>{m}</MenuItem>
        ))}
      </MenuBar>
      <Toolbar>
        {toolItems.map((it, i) => (
          <Slot key={i} $w={(i < toolItems.length - 1 ? toolItems[i + 1].x : it.x + 18) - it.x}>{it.el}</Slot>
        ))}
        <QuickWrap>
          <QuickAccess>Quick Access</QuickAccess>
          <Grip />
          <GripCurve />
          <Icon n="persp" />
          <PerspSep />
          <Icon n="cpersp" />
          <PerspectiveActive><Badge $w={17} $h={17} $fs={7}>MX</Badge></PerspectiveActive>
          <Icon n="bug" />
        </QuickWrap>
      </Toolbar>
      <Workspace>
        <LeftPanel>
          <TabHeader $bg="#e1e1e1" $h={28}>
            <Tab $w={148} $bg="#e1e1e1">
              <Icon n="explorer" />
              <span>Project Explorer</span>
              <Close />
            </Tab>
            <PanelTools $pr={20}>
              <MinBtn />
              <MaxBtn />
            </PanelTools>
          </TabHeader>
          <LeftTools>
            <Icon n="collapse" s={14} />
            <Icon n="link" />
            <ViewMenu width="12" height="7" viewBox="0 0 12 7">
              <path d="M.7.7h10.6L6 6z" fill="#fff" stroke="#8a8a8a" />
            </ViewMenu>
          </LeftTools>
          <Tree>
            <TreeRow $indent={5}><Twisty $open /><Badge $w={15} $h={15} $fs={8} $mr={1}>IDE</Badge><span>00_blink</span></TreeRow>
            <TreeRow $indent={26}><Twisty /><Icon n="inc" /><span>Includes</span></TreeRow>
            <TreeRow $indent={26}><Twisty /><Icon n="cfolder" /><span>Core</span></TreeRow>
            <TreeRow $indent={26}><Twisty /><Icon n="cfolder" /><span>Drivers</span></TreeRow>
            <TreeRow $indent={38}><Badge $w={15} $h={15} $fs={7.5}>MX</Badge><FocusName>00_blink.ioc</FocusName></TreeRow>
            <TreeRow $indent={38}><Icon n="ld" /><span>STM32F103C8TX_FLASH.ld</span></TreeRow>
          </Tree>
        </LeftPanel>
        <RightCol>
          <EditorPanel>
            <TabHeader $bg="#efefef" $h={28}>
              <Tab $w={129} $bg="#fff">
                <Badge $w={15} $h={15} $fs={7.5}>MX</Badge>
                <ActiveName>*00_blink.ioc</ActiveName>
                <Close />
              </Tab>
              <PanelTools $pr={18}>
                <MinBtn />
                <MaxBtn />
              </PanelTools>
            </TabHeader>
            <ClockNav>
              <NavTab>Pinout &amp; Configuration</NavTab>
              <NavTab $active>Clock Configuration</NavTab>
              <NavTab>Project Manager</NavTab>
              <NavTab>Tools</NavTab>
            </ClockNav>
            <ClockBody>
              <DiagramBar>
                <BarIcon>
                  <Ico width="14" height="14" viewBox="0 0 14 14"><path d="M6 1 2.5 4 6 7M3 4h8v8H1" fill="none" stroke="#3ba5dd" strokeWidth="1.7" /></Ico>
                </BarIcon>
                <BarIcon $ml={33}>
                  <Ico width="14" height="14" viewBox="0 0 14 14"><path d="M8 1l3.5 3L8 7M11 4H3v8h10" fill="none" stroke="#c9d0d6" strokeWidth="1.7" /></Ico>
                </BarIcon>
                <BarIcon $ml={85}>
                  <Ico width="16" height="16" viewBox="0 0 16 16"><path d="M6.5 1.5l3 2-3 2M8 3.5a5.6 5.6 0 1 1-5 3" fill="none" stroke="#3ba5dd" strokeWidth="1.6" /></Ico>
                </BarIcon>
                <ResolveBtn>Resolve Clock Issues</ResolveBtn>
                <BarIcon $ml={67}><Zoomer sign="+" /></BarIcon>
                <BarIcon $ml={35}>
                  <Ico width="15" height="15" viewBox="0 0 15 15"><path d="M1 5V1h4M10 1h4v4M14 10v4h-4M5 14H1v-4" fill="none" stroke="#7cc3e8" strokeWidth="1.2" /></Ico>
                </BarIcon>
                <BarIcon $ml={34}><Zoomer sign="-" /></BarIcon>
              </DiagramBar>
              <Diagram />
              <ScrollThumb />
            </ClockBody>
          </EditorPanel>
          <ConsolePanel>
            <TabHeader $bg="#dcdcdc" $h={27}>
              <Tab $w={99} $bg="#e1e1e1">
                <Icon n="console" s={15} />
                <span>Console</span>
                <Close />
              </Tab>
              <ConsoleTools>
                <ConsoleTool $w={26.6}><Icon n="pin" s={15} /></ConsoleTool>
                <ConsoleTool $w={22.4}><Icon n="consoleOff" s={15} /></ConsoleTool>
                <ConsoleTool $w={20}><Dd off /></ConsoleTool>
                <ConsoleTool $w={24}><Icon n="new" /></ConsoleTool>
                <ConsoleTool $w={30.5}><Dd /></ConsoleTool>
                <ConsoleTool $w={25.5}><MinBtn /></ConsoleTool>
                <ConsoleTool $w={10}><MaxBtn /></ConsoleTool>
              </ConsoleTools>
            </TabHeader>
            <ConsoleMsg>No consoles to display at this time.</ConsoleMsg>
          </ConsolePanel>
        </RightCol>
      </Workspace>
      <StatusBar>
        <StatusGrip />
        <StatusGrip $ml={356} />
        <Stopped>Stopped</Stopped>
        <StopIcon />
      </StatusBar>
    </Page>
  );
}
